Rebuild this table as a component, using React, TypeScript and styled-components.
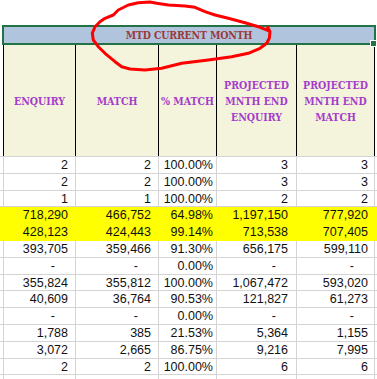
import styled, { createGlobalStyle } from "styled-components";

const GlobalStyle = createGlobalStyle`
  body {
    margin: 0;
    background: #ffffff;
    font-family: "Liberation Sans", Arial, sans-serif;
  }
`;

const COLS = "3px 72px 83px 58px 80px 78px 1fr";

const Sheet = styled.div`
  position: relative;
  width: 377px;
  height: 379px;
  overflow: hidden;
  background: #ffffff;
`;

const TitleBand = styled.div`
  position: relative;
  box-sizing: border-box;
  margin: 25px 1px 0 2px;
  height: 20px;
  border: 2px solid #217346;
  background: #b0c4de;
  display: flex;
  align-items: center;
  justify-content: center;
  font-family: "DejaVu Serif Condensed", "DejaVu Serif", serif;
  font-weight: bold;
  font-size: 10.5px;
  color: #9c3a3a;
  letter-spacing: -0.2px;
`;

const Handle = styled.span`
  position: absolute;
  right: -3px;
  bottom: -4px;
  width: 5px;
  height: 5px;
  background: #217346;
  border: 1px solid #ffffff;
`;

const HeadRow = styled.div`
  display: grid;
  grid-template-columns: ${COLS};
  height: 112px;
  box-sizing: border-box;
  border-bottom: 1px solid #d4d4d4;
`;

const HeadCell = styled.div`
  background: #f4f4dc;
  border-left: 1px solid #000000;
  display: flex;
  align-items: center;
  justify-content: center;
  text-align: center;
  font-family: "DejaVu Serif Condensed", "DejaVu Serif", serif;
  font-weight: bold;
  font-size: 10.5px;
  line-height: 16.3px;
  color: #a63ccb;
  padding-top: 1px;
`;

const Stub = styled.div<{ $line?: boolean }>`
  border-left: ${(p) => (p.$line ? "1px solid #000000" : "none")};
`;

const Row = styled.div<{ $hl?: boolean }>`
  display: grid;
  grid-template-columns: ${COLS};
  height: 16.8px;
  box-sizing: border-box;
  background: ${(p) => (p.$hl ? "#ffff00" : "#ffffff")};
  border-bottom: 1px solid ${(p) => (p.$hl ? "#ffff00" : "#d4d4d4")};
`;

const Cell = styled.div<{ $pad: number; $hl?: boolean }>`
  border-left: 1px solid ${(p) => (p.$hl ? "#ffff00" : "#d4d4d4")};
  text-align: right;
  padding-right: ${(p) => p.$pad}px;
  font-size: 12.5px;
  line-height: 16px;
  color: #111111;
  white-space: nowrap;
`;

const Overlay = styled.svg`
  position: absolute;
  left: 0;
  top: 0;
  pointer-events: none;
`;

const pads = [7, 7, 3, 8, 6];
const dashPad = 20;

const rows: { v: string[]; hl?: boolean }[] = [
  { v: ["2", "2", "100.00%", "3", "3"] },
  { v: ["2", "2", "100.00%", "3", "3"] },
  { v: ["1", "1", "100.00%", "2", "2"] },
  { v: ["718,290", "466,752", "64.98%", "1,197,150", "777,920"], hl: true },
  { v: ["428,123", "424,443", "99.14%", "713,538", "707,405"], hl: true },
  { v: ["393,705", "359,466", "91.30%", "656,175", "599,110"] },
  { v: ["-", "-", "0.00%", "-", "-"] },
  { v: ["355,824", "355,812", "100.00%", "1,067,472", "593,020"] },
  { v: ["40,609", "36,764", "90.53%", "121,827", "61,273"] },
  { v: ["-", "-", "0.00%", "-", "-"] },
  { v: ["1,788", "385", "21.53%", "5,364", "1,155"] },
  { v: ["3,072", "2,665", "86.75%", "9,216", "7,995"] },
  { v: ["2", "2", "100.00%", "6", "6"] },
  { v: ["", "", "", "", ""] },
];

const heads = [
  ["ENQUIRY"],
  ["MATCH"],
  ["% MATCH"],
  ["PROJECTED", "MNTH END", "ENQUIRY"],
  ["PROJECTED", "MNTH END", "MATCH"],
];

// hand-drawn red ring round the title
const circle =
  "268.3,30.7 258.3,26.7 245,22.7 228.3,18.3 215,15 205,11.7 195,7.3 185,6 168.3,5 156.7,3.3 150,2 138.3,2.7 128.3,5 118.3,10 113.3,15 105,18.3 100,21.7 95,26.7 92.3,33.3 93.3,40 98.3,46.7 105,53.3 115,61.7 121.7,66.7 130,69 145,70 161.7,68.3 181.7,63.3 208.3,60 231.7,56.7 248.3,53.3 260,48.3 266.7,43.3 269.3,38.3 270,31.7 267.7,27.3";

export default function App() {
  return (
    <>
      <GlobalStyle />
      <Sheet>
        <TitleBand>
          MTD CURRENT MONTH
          <Handle />
        </TitleBand>
        <HeadRow>
          <Stub />
          {heads.map((lines, i) => (
            <HeadCell key={i}>
              <div>
                {lines.map((l) => (
                  <div key={l}>{l}</div>
                ))}
              </div>
            </HeadCell>
          ))}
          <Stub $line />
        </HeadRow>
        {rows.map((r, i) => (
          <Row key={i} $hl={r.hl}>
            <div />
            {r.v.map((val, j) => (
              <Cell key={j} $hl={r.hl} $pad={val === "-" ? dashPad : pads[j]}>
                {val}
              </Cell>
            ))}
            <Cell $hl={r.hl} $pad={0} />
          </Row>
        ))}
        <Overlay width="377" height="80" viewBox="0 0 377 80">
          <polyline
            points={circle}
            fill="none"
            stroke="#ff0000"
            strokeWidth="3"
            strokeLinejoin="round"
            strokeLinecap="round"
          />
        </Overlay>
      </Sheet>
    </>
  );
}
